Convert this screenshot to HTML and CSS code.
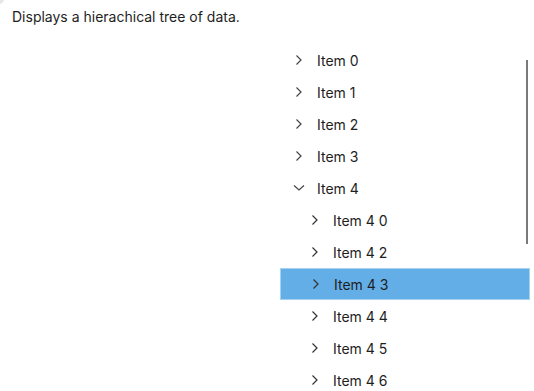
FILE: index.html
```html
<!DOCTYPE html>
<html>
<head>
<meta charset="utf-8">
<link rel="stylesheet" href="styles.css">
</head>
<body>
<div class="corner"></div>
<p class="desc">Displays a hierachical tree of data.</p>
<div class="wrap">
  <div class="tree">
    <div class="row"><span class="chev"><svg width="8" height="12" viewBox="0 0 8 12"><path d="M1.5 1.5 L6 6 L1.5 10.5" /></svg></span><span class="label">Item 0</span></div>
    <div class="row"><span class="chev"><svg width="8" height="12" viewBox="0 0 8 12"><path d="M1.5 1.5 L6 6 L1.5 10.5" /></svg></span><span class="label">Item 1</span></div>
    <div class="row"><span class="chev"><svg width="8" height="12" viewBox="0 0 8 12"><path d="M1.5 1.5 L6 6 L1.5 10.5" /></svg></span><span class="label">Item 2</span></div>
    <div class="row"><span class="chev"><svg width="8" height="12" viewBox="0 0 8 12"><path d="M1.5 1.5 L6 6 L1.5 10.5" /></svg></span><span class="label">Item 3</span></div>
    <div class="row"><span class="chev open"><svg width="12" height="8" viewBox="0 0 12 8"><path d="M1 1.5 L6 6 L11 1.5" /></svg></span><span class="label">Item 4</span></div>
    <div class="row child"><span class="chev"><svg width="8" height="12" viewBox="0 0 8 12"><path d="M1.5 1.5 L6 6 L1.5 10.5" /></svg></span><span class="label">Item 4 0</span></div>
    <div class="row child"><span class="chev"><svg width="8" height="12" viewBox="0 0 8 12"><path d="M1.5 1.5 L6 6 L1.5 10.5" /></svg></span><span class="label">Item 4 2</span></div>
    <div class="row child selected"><span class="chev"><svg width="8" height="12" viewBox="0 0 8 12"><path d="M1.5 1.5 L6 6 L1.5 10.5" /></svg></span><span class="label">Item 4 3</span></div>
    <div class="row child"><span class="chev"><svg width="8" height="12" viewBox="0 0 8 12"><path d="M1.5 1.5 L6 6 L1.5 10.5" /></svg></span><span class="label">Item 4 4</span></div>
    <div class="row child"><span class="chev"><svg width="8" height="12" viewBox="0 0 8 12"><path d="M1.5 1.5 L6 6 L1.5 10.5" /></svg></span><span class="label">Item 4 5</span></div>
    <div class="row child"><span class="chev"><svg width="8" height="12" viewBox="0 0 8 12"><path d="M1.5 1.5 L6 6 L1.5 10.5" /></svg></span><span class="label">Item 4 6</span></div>
  </div>
  <div class="scrollbar"></div>
</div>
</body>
</html>
```
FILE: styles.css
```css
html, body {
  margin: 0;
  padding: 0;
  background: #ffffff;
  overflow: hidden;
  height: 391px;
}
body {
  font-family: Inter, "Noto Sans", sans-serif;
  color: #1e1e1e;
  position: relative;
}
.corner {
  position: absolute;
  left: -6px;
  top: -6px;
  width: 10px;
  height: 10px;
  border-radius: 50%;
  background: #e6e6e6;
}
.desc {
  margin: 0;
  padding: 7px 12px 0 12px;
  font-size: 14px;
  line-height: 20px;
}
.wrap {
  position: relative;
  margin: 17px 0 0 280px;
  width: 250px;
}
.tree {
  display: flex;
  flex-direction: column;
}
.row {
  height: 32px;
  display: flex;
  align-items: center;
  font-size: 14px;
  box-sizing: border-box;
  padding-left: 13px;
}
.row.child {
  padding-left: 29px;
}
.chev {
  width: 12px;
  height: 12px;
  display: flex;
  align-items: center;
  justify-content: center;
  margin-right: 12px;
}
.chev svg path {
  fill: none;
  stroke: #444;
  stroke-width: 1.2;
}
.row.child .chev svg path {
  stroke: #333;
}
.label {
  color: #1e1e1e;
}
.selected {
  background: #64aee8;
  border: 1px solid #a6d2f4;
  padding-left: 28px;
}
.scrollbar {
  position: absolute;
  left: 246px;
  top: 16px;
  width: 2px;
  height: 184px;
  background: #7a7a7a;
}
```
